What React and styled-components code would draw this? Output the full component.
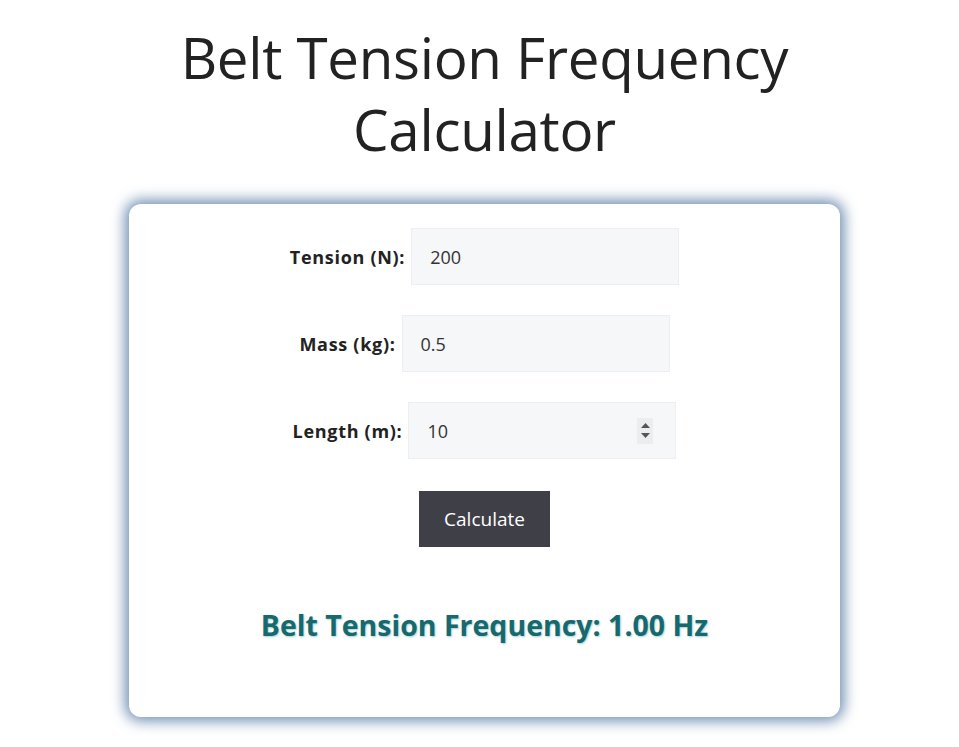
import React, { useState } from 'react';
import styled, { createGlobalStyle } from 'styled-components';

const GlobalStyle = createGlobalStyle`
  body {
    margin: 0;
    background: #ffffff;
    font-family: 'Open Sans', 'Noto Sans', sans-serif;
    color: #212529;
  }
`;

const Page = styled.div`
  display: flex;
  flex-direction: column;
  align-items: center;
  padding: 22px 0 30px 10px;
`;

const Title = styled.h1`
  margin: 0 0 38px;
  font-size: 56.5px;
  font-weight: 400;
  line-height: 72px;
  text-align: center;
  color: #222;
  letter-spacing: -0.3px;
`;

const Card = styled.div`
  width: 711px;
  box-sizing: border-box;
  padding: 24px 20px 73px;
  background: #fff;
  border-radius: 12px;
  box-shadow: 0 0 14px 4px rgba(72, 112, 158, 0.78);
  display: flex;
  flex-direction: column;
  align-items: center;
`;

const Row = styled.div`
  display: flex;
  align-items: center;
  gap: 6px;
  margin-bottom: 30px;
`;

const Label = styled.label`
  font-size: 18px;
  font-weight: 700;
  color: #222;
  letter-spacing: 0.7px;
`;

const Field = styled.div`
  display: flex;
  align-items: center;
  width: 268px;
  height: 57px;
  box-sizing: border-box;
  padding: 0 22px 0 18px;
  background: #f6f7f9;
  border: 1px solid #eceef1;
`;

const Input = styled.input`
  flex: 1;
  min-width: 0;
  border: none;
  outline: none;
  background: transparent;
  font-family: inherit;
  font-size: 18px;
  color: #333;
  padding: 0;
`;

const Spinner = styled.div`
  display: flex;
  flex-direction: column;
  align-items: center;
  justify-content: center;
  gap: 5px;
  width: 16px;
  height: 26px;
  background: #ededef;
`;

const Button = styled.button`
  width: 131px;
  height: 56px;
  margin-top: 2px;
  border: none;
  background: #3f3f48;
  color: #fff;
  font-family: inherit;
  font-size: 19px;
  cursor: pointer;
`;

const Result = styled.h2`
  margin: 59px 0 0;
  font-size: 28.5px;
  font-weight: 700;
  color: #16696d;
  text-shadow: 1px 1px 2px rgba(60, 150, 160, 0.45);
`;

function Arrow({ down }) {
  return (
    <svg width="9" height="5" viewBox="0 0 9 5">
      <path d={down ? 'M0 0 L9 0 L4.5 5 Z' : 'M0 5 L9 5 L4.5 0 Z'} fill="#555" />
    </svg>
  );
}

export default function App() {
  const [tension, setTension] = useState('200');
  const [mass, setMass] = useState('0.5');
  const [length, setLength] = useState('10');

  return (
    <>
      <GlobalStyle />
      <Page>
        <Title>
          Belt Tension Frequency
          <br />
          Calculator
        </Title>
        <Card>
          <Row>
            <Label>Tension (N):</Label>
            <Field>
              <Input value={tension} onChange={(e) => setTension(e.target.value)} />
            </Field>
          </Row>
          <Row>
            <Label>Mass (kg):</Label>
            <Field>
              <Input value={mass} onChange={(e) => setMass(e.target.value)} />
            </Field>
          </Row>
          <Row>
            <Label>Length (m):</Label>
            <Field>
              <Input value={length} onChange={(e) => setLength(e.target.value)} />
              <Spinner>
                <Arrow />
                <Arrow down />
              </Spinner>
            </Field>
          </Row>
          <Button>Calculate</Button>
          <Result>Belt Tension Frequency: 1.00 Hz</Result>
        </Card>
      </Page>
    </>
  );
}
